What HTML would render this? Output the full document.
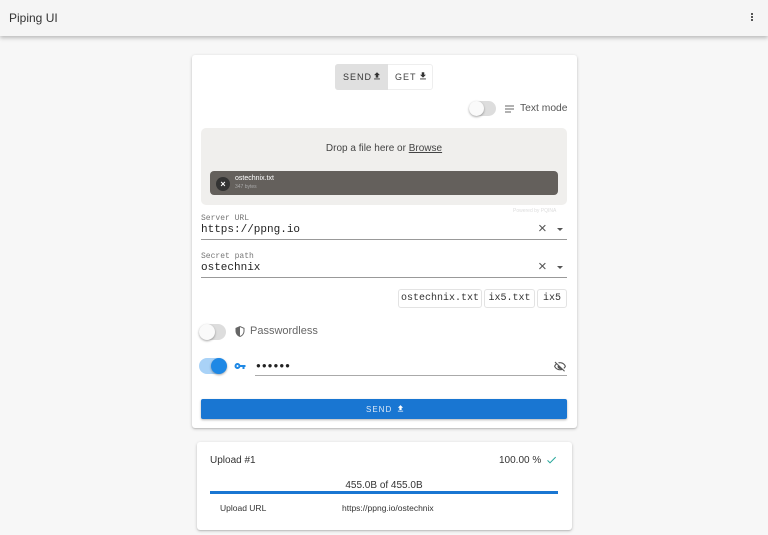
<!DOCTYPE html>
<html><head><style>
*{box-sizing:border-box;margin:0;padding:0}
body{width:768px;height:535px;background:#f7f7f7;font-family:"Liberation Sans","DejaVu Sans",sans-serif;position:relative;overflow:hidden;color:#333}
.a{position:absolute}
.hdr{left:0;top:0;width:768px;height:36px;background:#f5f5f5;box-shadow:0 2px 4px rgba(0,0,0,.25)}
.card{background:#fff;box-shadow:0 1px 3px rgba(0,0,0,.2),0 1px 1px rgba(0,0,0,.1);border-radius:3px}
.mono{font-family:"Liberation Mono","DejaVu Sans Mono",monospace}
.lbl{font-size:8px;color:#777}
.ul{height:1px;background:#999}
.chip{border:1px solid #e3e3e3;border-radius:3px;height:19px;font-size:10px;line-height:17px;text-align:center;color:#333}
.tg{width:27px;height:15px;border-radius:8px;background:#ddd}
.knob{width:15px;height:15px;border-radius:50%;background:#fafafa;box-shadow:0 1px 2px rgba(0,0,0,.35);position:absolute;top:0}
</style></head><body>
<div class="a hdr"></div>
<div class="a" style="left:9px;top:11px;font-size:12px;color:#333">Piping UI</div>
<div class="a" style="left:751px;top:13px;width:2px;height:2px;background:#555;box-shadow:0 3px 0 #555,0 6px 0 #555"></div>

<div class="a card" style="left:192px;top:55px;width:385px;height:373px"></div>
<div class="a" style="left:335px;top:64px;width:98px;height:26px;border:1px solid #eee;border-radius:3px;background:#fff"></div>
<div class="a" style="left:335px;top:64px;width:53px;height:26px;background:#e0e0e0;border-radius:3px 0 0 3px"></div>
<div class="a" style="left:343px;top:72px;font-size:9px;letter-spacing:1px;color:#333">SEND</div>
<svg class="a" style="left:372px;top:71px" width="10" height="10" viewBox="0 0 24 24"><path d="M5 20h14v-2H5zM5 10h4v6h6v-6h4l-7-7z" fill="#333"/></svg>
<div class="a" style="left:395px;top:72px;font-size:9px;letter-spacing:1px;color:#444">GET</div>
<svg class="a" style="left:418px;top:71px" width="10" height="10" viewBox="0 0 24 24"><path d="M5 20h14v-2H5zM19 9h-4V3H9v6H5l7 7z" fill="#333"/></svg>

<div class="a tg" style="left:469px;top:101px"><div class="knob" style="left:0"></div></div>
<svg class="a" style="left:503px;top:103px" width="13" height="12" viewBox="0 0 24 24"><path d="M3 5h18v2H3zM3 11h18v2H3zM3 17h12v2H3z" fill="#666"/></svg>
<div class="a" style="left:520px;top:103px;font-size:10.3px;color:#555">Text mode</div>

<div class="a" style="left:201px;top:128px;width:366px;height:77px;background:#f0efed;border-radius:5px"></div>
<div class="a" style="left:201px;top:143px;width:366px;text-align:center;font-size:10px;color:#444">Drop a file here or <u>Browse</u></div>
<div class="a" style="left:210px;top:171px;width:348px;height:24px;background:#64605c;border-radius:4px"></div>
<div class="a" style="left:216px;top:177px;width:14px;height:14px;border-radius:50%;background:#333;color:#fff;font-size:9px;line-height:14px;text-align:center;font-weight:bold">×</div>
<div class="a" style="left:235px;top:175px;font-size:7px;color:#fff">ostechnix.txt</div>
<div class="a" style="left:235px;top:184px;font-size:5px;color:#aaa">347 bytes</div>
<div class="a" style="left:513px;top:208px;font-size:5px;color:#ddd">Powered by PQINA</div>

<div class="a lbl mono" style="left:201px;top:214px">Server URL</div>
<div class="a mono" style="left:201px;top:224px;font-size:11px;color:#222">https://ppng.io</div>
<div class="a" style="left:538px;top:220px;font-size:15px;color:#555">×</div>
<div class="a" style="left:557px;top:228px;border:3px solid transparent;border-top:3px solid #555"></div>
<div class="a ul" style="left:201px;top:239px;width:366px"></div>

<div class="a lbl mono" style="left:201px;top:252px">Secret path</div>
<div class="a mono" style="left:201px;top:262px;font-size:11px;color:#222">ostechnix</div>
<div class="a" style="left:538px;top:258px;font-size:15px;color:#555">×</div>
<div class="a" style="left:557px;top:266px;border:3px solid transparent;border-top:3px solid #555"></div>
<div class="a ul" style="left:201px;top:277px;width:366px"></div>

<div class="a chip mono" style="left:398px;top:289px;width:84px">ostechnix.txt</div>
<div class="a chip mono" style="left:484px;top:289px;width:51px">ix5.txt</div>
<div class="a chip mono" style="left:537px;top:289px;width:30px">ix5</div>

<div class="a tg" style="left:199px;top:324px;height:16px"><div class="knob" style="left:0;height:16px;width:16px"></div></div>
<svg class="a" style="left:234px;top:325px" width="12" height="13" viewBox="0 0 24 24"><path d="M12 1L3 5v6c0 5.5 3.8 10.7 9 12 5.2-1.3 9-6.5 9-12V5zm0 2.2l7 3.1V11c0 4.5-3 8.7-7 9.9z" fill="#666"/></svg>
<div class="a" style="left:250px;top:325px;font-size:11px;color:#666">Passwordless</div>

<div class="a tg" style="left:199px;top:358px;height:16px;background:#a9d2f7"><div class="knob" style="left:12px;height:16px;width:16px;background:#1e88e5"></div></div>
<svg class="a" style="left:233px;top:360px" width="14" height="12" viewBox="0 0 24 24"><path d="M12.65 10A6 6 0 1 0 12.65 14H17v4h4v-4h2v-4zM7 14a2 2 0 1 1 0-4 2 2 0 0 1 0 4z" fill="#1e88e5"/></svg>
<div class="a" style="left:256px;top:361px;font-size:8px;letter-spacing:1px;color:#222">●●●●●●</div>
<svg class="a" style="left:553px;top:360px" width="14" height="13" viewBox="0 0 24 24"><path d="M12 6c3.8 0 7.2 2.1 8.8 5.5-.6 1.2-1.4 2.300-2.4 3.2l1.4 1.4c1.4-1.3 2.6-2.9 3.2-4.6C21.3 7.1 17 4 12 4c-1.3 0-2.5.2-3.6.6l1.7 1.7C10.6 6.1 11.3 6 12 6zM2 4.3l2.3 2.3C2.9 7.9 1.7 9.6 1 11.5 2.7 15.9 7 19 12 19c1.5 0 3-.3 4.4-.8l3.3 3.3 1.4-1.4L3.4 2.9zM12 17c-3.8 0-7.2-2.1-8.8-5.5.7-1.4 1.7-2.6 2.8-3.5l2 2c-.3.6-.5 1.3-.5 2a4.5 4.5 0 0 0 6.6 4z" fill="#555"/></svg>
<div class="a ul" style="left:255px;top:375px;width:312px;background:#aaa"></div>

<div class="a" style="left:201px;top:399px;width:366px;height:20px;background:#1976d2;border-radius:2px;box-shadow:0 1px 2px rgba(0,0,0,.3)"></div>
<div class="a" style="left:366px;top:405px;font-size:8px;letter-spacing:1px;color:#dbe8f7">SEND</div>
<svg class="a" style="left:396px;top:404px" width="9" height="9" viewBox="0 0 24 24"><path d="M5 20h14v-2H5zM5 10h4v6h6v-6h4l-7-7z" fill="#fff"/></svg>

<div class="a card" style="left:197px;top:442px;width:375px;height:88px"></div>
<div class="a" style="left:210px;top:455px;font-size:10px;color:#333">Upload #1</div>
<div class="a" style="left:499px;top:455px;font-size:10px;color:#333">100.00 %</div>
<svg class="a" style="left:545px;top:454px" width="13" height="12" viewBox="0 0 24 24"><path d="M9 16.2L4.8 12l-1.4 1.4L9 19 21 7l-1.4-1.4z" fill="#26a69a"/></svg>
<div class="a" style="left:210px;top:480px;width:348px;text-align:center;font-size:10px;color:#333">455.0B of 455.0B</div>
<div class="a" style="left:210px;top:491px;width:348px;height:3px;background:#1976d2"></div>
<div class="a" style="left:220px;top:503px;font-size:8.5px;color:#333">Upload URL</div>
<div class="a" style="left:342px;top:503px;font-size:8.5px;color:#333">https://ppng.io/ostechnix</div>
</body></html>
